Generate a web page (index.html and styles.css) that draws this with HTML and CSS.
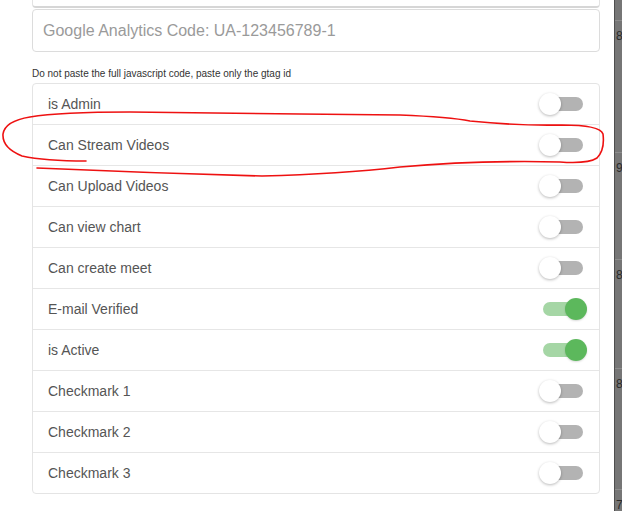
FILE: index.html
```html
<!DOCTYPE html>
<html>
<head>
<meta charset="utf-8">
<link rel="stylesheet" href="styles.css">
</head>
<body>
<div class="page">
  <main class="main">
    <div class="prev-field"></div>
    <input class="ga-input" type="text" placeholder="Google Analytics Code: UA-123456789-1">
    <p class="help">Do not paste the full javascript code, paste only the gtag id</p>
    <ul class="card">
      <li class="row"><span class="label">is Admin</span><span class="switch"><span class="track"></span><span class="knob"></span></span></li>
      <li class="row"><span class="label">Can Stream Videos</span><span class="switch"><span class="track"></span><span class="knob"></span></span></li>
      <li class="row"><span class="label">Can Upload Videos</span><span class="switch"><span class="track"></span><span class="knob"></span></span></li>
      <li class="row"><span class="label">Can view chart</span><span class="switch"><span class="track"></span><span class="knob"></span></span></li>
      <li class="row"><span class="label">Can create meet</span><span class="switch"><span class="track"></span><span class="knob"></span></span></li>
      <li class="row"><span class="label">E-mail Verified</span><span class="switch on"><span class="track"></span><span class="knob"></span></span></li>
      <li class="row"><span class="label">is Active</span><span class="switch on"><span class="track"></span><span class="knob"></span></span></li>
      <li class="row"><span class="label">Checkmark 1</span><span class="switch"><span class="track"></span><span class="knob"></span></span></li>
      <li class="row"><span class="label">Checkmark 2</span><span class="switch"><span class="track"></span><span class="knob"></span></span></li>
      <li class="row"><span class="label">Checkmark 3</span><span class="switch"><span class="track"></span><span class="knob"></span></span></li>
    </ul>
  </main>
  <aside class="strip">
    <div class="cell c0"></div>
    <div class="cell c1">8</div>
    <div class="cell c2">9</div>
    <div class="cell c3">8</div>
    <div class="cell c4">8</div>
    <div class="cell c5">7</div>
  </aside>
</div>
<svg class="scribble" width="622" height="511" viewBox="0 0 622 511">
  <path d="M 86 161 Q 45 161 22 156 Q 2 148 3 134 Q 5 121 30 117 Q 60 112 130 112 L 300 114 L 400 115 Q 450 117 470 121 Q 520 126 562 125 Q 600 125 603 134 Q 605 150 597 158 Q 588 164 560 162 Q 480 160 400 167 Q 340 174 262 176 Q 150 173 37 168" fill="none" stroke="#ee1111" stroke-width="1.6" stroke-linecap="round" stroke-linejoin="round"/>
</svg>
</body>
</html>
```

FILE: styles.css
```css
* { box-sizing: border-box; }
html, body { margin: 0; padding: 0; background: #fff; }
body {
  width: 622px;
  height: 511px;
  overflow: hidden;
  position: relative;
  font-family: "Liberation Sans", Arial, sans-serif;
}
.page {
  display: flex;
  height: 511px;
}
.main {
  flex: 0 0 614px;
  padding: 0 14px 0 32px;
  display: flex;
  flex-direction: column;
}
.prev-field {
  height: 8px;
  border: 1px solid #e3e3e3;
  border-top: none;
  border-bottom: 2px solid #d6d6d6;
  border-radius: 0 0 4px 4px;
}
.ga-input {
  display: block;
  margin: 1px 0 0;
  width: 568px;
  height: 43px;
  border: 1px solid #dcdcdc;
  border-radius: 4px;
  padding: 0 10px;
  font-family: "Liberation Sans", Arial, sans-serif;
  font-size: 16px;
  color: #555;
  background: #fff;
  outline: none;
}
.ga-input::placeholder { color: #9a9a9a; }
.help {
  margin: 15px 0 2px;
  font-size: 10px;
  line-height: 14px;
  color: #333;
}
.card {
  list-style: none;
  margin: 0;
  padding: 0;
  border: 1px solid #e4e4e4;
  border-radius: 4px;
}
.row {
  height: 41px;
  display: flex;
  align-items: center;
  justify-content: space-between;
  padding: 0 16px 0 15px;
  border-top: 1px solid #e6e6e6;
}
.row:first-child {
  height: 40px;
  border-top: none;
}
.label {
  font-size: 14px;
  color: #555;
}
.switch {
  position: relative;
  width: 40px;
  height: 14px;
}
.track {
  display: block;
  width: 40px;
  height: 14px;
  border-radius: 7px;
  background: #b3b3b3;
}
.knob {
  position: absolute;
  top: -4px;
  left: -4px;
  width: 22px;
  height: 22px;
  border-radius: 50%;
  background: #fff;
  box-shadow: 0 1px 3px rgba(0,0,0,0.28);
}
.switch.on .track { background: #a5d6a5; }
.switch.on .knob {
  left: 22px;
  background: #5cb85c;
  box-shadow: 0 1px 2px rgba(0,0,0,0.15);
}
.strip {
  flex: 1;
  background: #767676;
  border-left: 1px solid #4e4e4e;
  display: flex;
  flex-direction: column;
  overflow: hidden;
}
.cell {
  font-size: 12px;
  line-height: 12px;
  color: #2a2a2a;
  padding: 9px 0 0 1px;
  border-top: 1px solid #8c8c8c;
  white-space: nowrap;
}
.c0 { height: 20px; border-top: none; padding: 0; }
.c1 { height: 132px; }
.c2 { height: 107px; }
.c3 { height: 109px; }
.c4 { height: 121px; }
.c5 { height: 22px; }
.scribble {
  position: absolute;
  left: 0;
  top: 0;
  pointer-events: none;
}
```
